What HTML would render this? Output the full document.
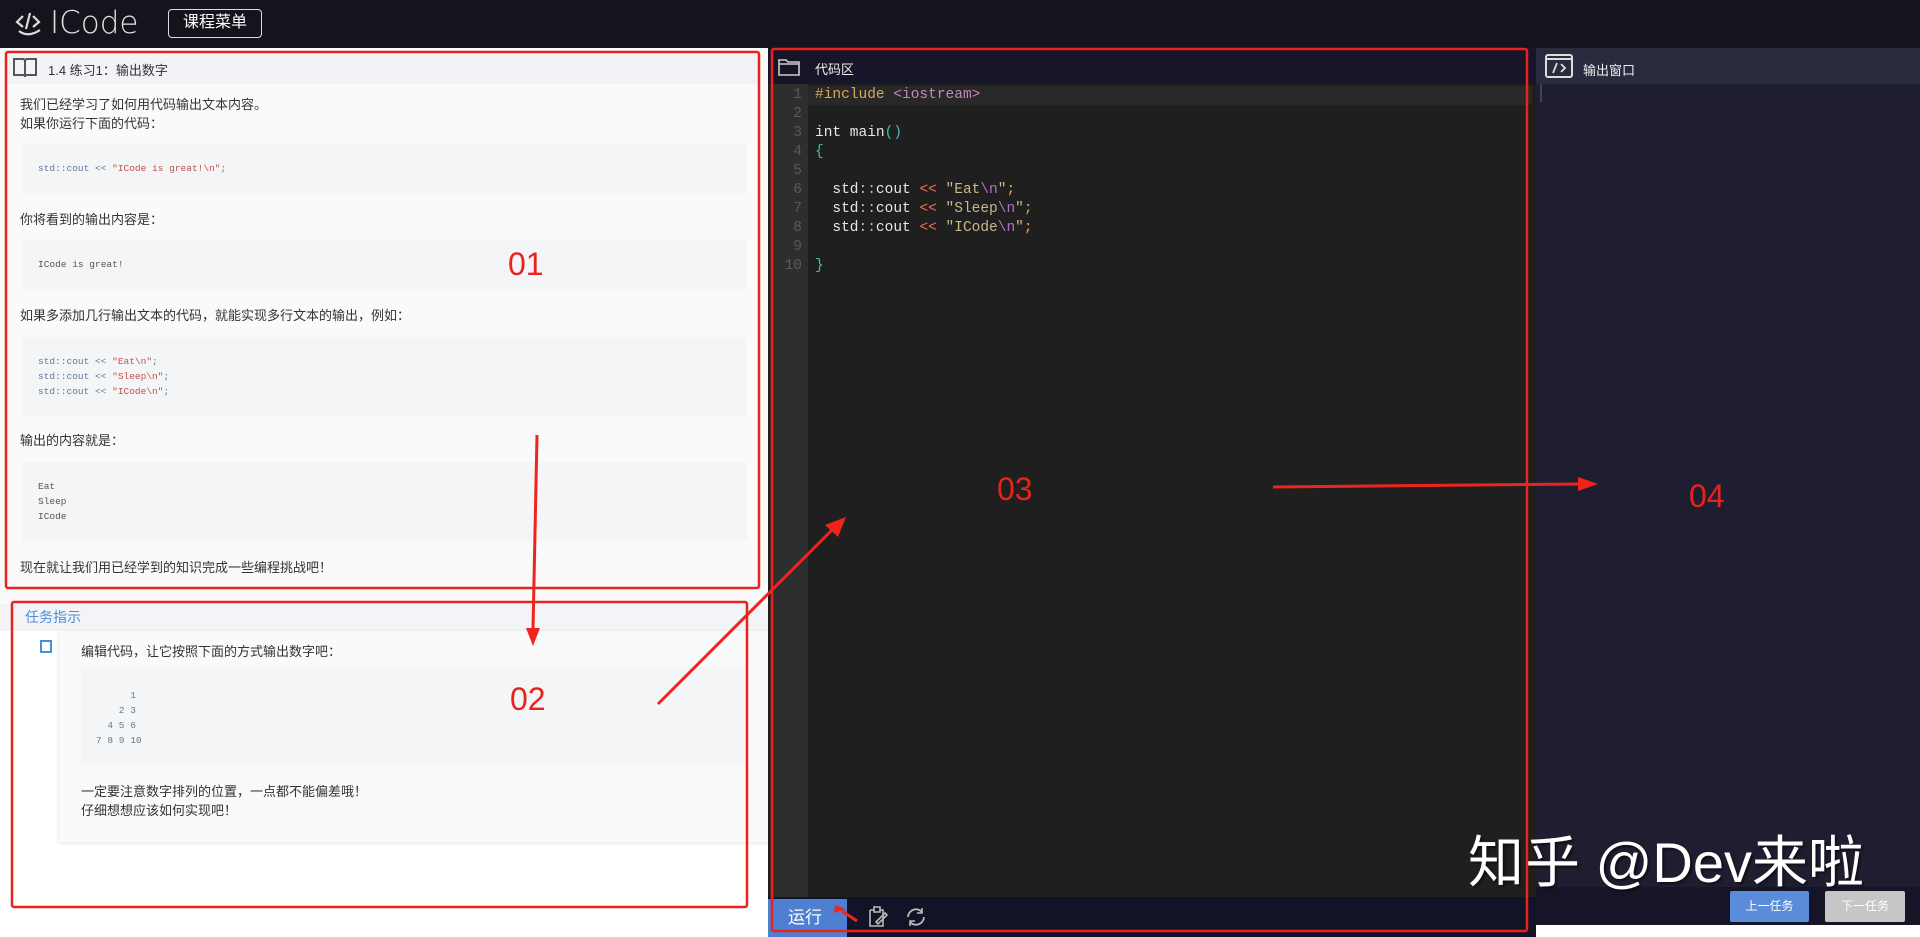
<!DOCTYPE html>
<html><head><meta charset="utf-8"><style>
*{margin:0;padding:0;box-sizing:border-box}
body{width:1920px;height:937px;overflow:hidden;background:#fff;font-family:"Liberation Sans","Noto Sans CJK SC",sans-serif;position:relative}
.a{position:absolute}
.t{font-size:13px;color:#333;white-space:nowrap}
.cb{position:absolute;left:22px;width:725px;background:#f4f5f7}
.m{font-family:"Liberation Mono",monospace;font-size:9.5px;line-height:15px;white-space:pre}
.ed{font-family:"Liberation Mono","DejaVu Sans Mono",monospace;font-size:14.5px;line-height:19px;white-space:pre}
</style></head><body>
<!-- header -->
<div class="a" style="left:0;top:0;width:1920px;height:48px;background:#14141c"></div>
<svg class="a" style="left:14px;top:10px" width="36" height="28" viewBox="0 0 36 28"><path d="M9 6 L3 12 L9 17 M16 3 L12 19 M19 6 L25 12 L19 17" stroke="#ddd" stroke-width="2.2" fill="none"/><path d="M5 21 Q14 28 26 20" stroke="#ddd" stroke-width="2.2" fill="none"/></svg>
<div class="a" style="left:50px;top:5px;color:#e0e0e0;font-size:31px;font-family:'DejaVu Sans',sans-serif;font-weight:200">ICode</div>
<div class="a" style="left:168px;top:9px;width:94px;height:29px;border:1.5px solid #ddd;border-radius:4px;color:#fff;font-size:16px;text-align:center;line-height:26px">课程菜单</div>

<!-- left panel -->
<div class="a" style="left:0;top:48px;width:768px;height:556px;background:#fafafa"></div>
<div class="a" style="left:5px;top:55px;width:755px;height:29px;background:#f2f3f7"></div>
<svg class="a" style="left:12px;top:57px" width="26" height="22" viewBox="0 0 26 22"><path d="M2 2 H11 Q13 2 13 5 V20 Q13 18 11 18 H2 Z M24 2 H15 Q13 2 13 5 V20 Q13 18 15 18 H24 Z" fill="none" stroke="#555" stroke-width="2"/></svg>
<div class="a t" style="left:48px;top:60px">1.4 练习1：输出数字</div>
<div class="a t" style="left:20px;top:95px;line-height:19px">我们已经学习了如何用代码输出文本内容。<br>如果你运行下面的代码：</div>
<div class="cb" style="top:144px;height:49px"></div>
<div class="a m" style="left:38px;top:161px;color:#5a7a9a">std::cout &lt;&lt; <span style="color:#c0504d">"ICode is great!\n"</span>;</div>
<div class="a t" style="left:20px;top:209px">你将看到的输出内容是：</div>
<div class="cb" style="top:240px;height:49px"></div>
<div class="a m" style="left:38px;top:257px;color:#555">ICode is great!</div>
<div class="a t" style="left:20px;top:305px">如果多添加几行输出文本的代码，就能实现多行文本的输出，例如：</div>
<div class="cb" style="top:337px;height:79px"></div>
<div class="a m" style="left:38px;top:354px;color:#5a7a9a">std::cout &lt;&lt; <span style="color:#c0504d">"Eat\n"</span>;
std::cout &lt;&lt; <span style="color:#c0504d">"Sleep\n"</span>;
std::cout &lt;&lt; <span style="color:#c0504d">"ICode\n"</span>;</div>
<div class="a t" style="left:20px;top:430px">输出的内容就是：</div>
<div class="cb" style="top:462px;height:79px"></div>
<div class="a m" style="left:38px;top:479px;color:#555">Eat
Sleep
ICode</div>
<div class="a t" style="left:20px;top:557px">现在就让我们用已经学到的知识完成一些编程挑战吧！</div>

<div class="a" style="left:0;top:604px;width:768px;height:27px;background:#f3f4f8"></div>
<div class="a" style="left:25px;top:607px;font-size:14px;color:#4a8fd6">任务指示</div>
<div class="a" style="left:59px;top:631px;width:709px;height:211px;background:#fafafa;box-shadow:0 1px 4px rgba(0,0,0,.12)"></div>
<div class="a" style="left:40px;top:640px;width:12px;height:13px;border:2.5px solid #4a8fd6"></div>
<div class="a t" style="left:81px;top:641px">编辑代码，让它按照下面的方式输出数字吧：</div>
<div class="a" style="left:81px;top:667px;width:665px;height:98px;background:#f4f5f7"></div>
<div class="a m" style="left:96px;top:688px;color:#5a7a9a">      1
    2 3
  4 5 6
7 8 9 10</div>
<div class="a t" style="left:81px;top:782px;line-height:19px">一定要注意数字排列的位置，一点都不能偏差哦！<br>仔细想想应该如何实现吧！</div>

<!-- middle code panel -->
<div class="a" style="left:768px;top:48px;width:768px;height:889px;background:#1f1f1f"></div>
<div class="a" style="left:768px;top:48px;width:768px;height:36px;background:#161628"></div>
<svg class="a" style="left:777px;top:57px" width="24" height="20" viewBox="0 0 24 20"><path d="M2 3 H9 L11 5 H22 V18 H2 Z M2 7 H22" fill="none" stroke="#ccc" stroke-width="1.6"/></svg>
<div class="a" style="left:815px;top:59px;color:#eee;font-size:13px">代码区</div>
<div class="a" style="left:772px;top:84px;width:36px;height:813px;background:#2e2e2e"></div>
<div class="a" style="left:808px;top:86px;width:724px;height:19px;background:#282828"></div>
<div class="a ed" style="left:772px;top:86px;width:30px;text-align:right;color:#5a5a5a">1
2
3
4
5
6
7
8
9
10</div>
<div class="a ed" style="left:815px;top:86px;color:#e6e6e6"><span style="color:#d6a85c">#include</span> <span style="color:#c585c0">&lt;iostream&gt;</span>

int main<span style="color:#3fbfb0">()</span>
<span style="color:#3fbfb0">{</span>

  std<span style="color:#bbb">::</span>cout <span style="color:#f07050">&lt;&lt;</span> <span style="color:#c8b88a">"Eat<span style="color:#b070c0">\n</span>"</span><span style="color:#f0a050">;</span>
  std<span style="color:#bbb">::</span>cout <span style="color:#f07050">&lt;&lt;</span> <span style="color:#c8b88a">"Sleep<span style="color:#b070c0">\n</span>"</span><span style="color:#f0a050">;</span>
  std<span style="color:#bbb">::</span>cout <span style="color:#f07050">&lt;&lt;</span> <span style="color:#c8b88a">"ICode<span style="color:#b070c0">\n</span>"</span><span style="color:#f0a050">;</span>

<span style="color:#3fbfb0">}</span></div>
<div class="a" style="left:768px;top:897px;width:768px;height:40px;background:#131327"></div>
<div class="a" style="left:768px;top:899px;width:79px;height:38px;background:#4f7fd0;color:#fff;font-size:17px;line-height:38px;padding-left:20px">运行</div>
<svg class="a" style="left:866px;top:904px" width="24" height="26" viewBox="0 0 24 26"><path d="M4 6 H8 M14 6 H17 V22 H4 V6 M8 3 H14 V8 H8 Z M10 18 L19 9 L21 11 L12 20 Z" fill="none" stroke="#bbb" stroke-width="1.6"/></svg>
<svg class="a" style="left:904px;top:904px" width="24" height="26" viewBox="0 0 24 26"><path d="M4 13 A8 8 0 0 1 18 8 M20 13 A8 8 0 0 1 6 18" fill="none" stroke="#bbb" stroke-width="1.8"/><path d="M18 4 V9 H13 M6 22 V17 H11" fill="none" stroke="#bbb" stroke-width="1.6"/></svg>

<!-- right panel -->
<div class="a" style="left:1536px;top:48px;width:384px;height:839px;background:#1f1e30"></div>
<div class="a" style="left:1536px;top:48px;width:384px;height:36px;background:#2b2b3f"></div>
<div class="a" style="left:1540px;top:84px;width:2px;height:18px;background:#444"></div>
<svg class="a" style="left:1544px;top:53px" width="30" height="26" viewBox="0 0 30 26"><rect x="2" y="2" width="26" height="22" rx="2" fill="none" stroke="#ddd" stroke-width="2"/><path d="M3 6 H27" stroke="#ddd" stroke-width="2"/><path d="M9 20 L13 10 M17 11 L21 15 L17 19" fill="none" stroke="#ddd" stroke-width="1.8"/></svg>
<div class="a" style="left:1583px;top:60px;color:#eee;font-size:13px">输出窗口</div>
<div class="a" style="left:1536px;top:887px;width:384px;height:38px;background:#161528"></div>
<div class="a" style="left:1730px;top:891px;width:79px;height:31px;background:#5b8cd9;color:#fff;font-size:12px;text-align:center;line-height:31px;border-radius:2px">上一任务</div>
<div class="a" style="left:1825px;top:891px;width:80px;height:31px;background:#c6c6c6;color:#fff;font-size:12px;text-align:center;line-height:31px;border-radius:2px">下一任务</div>
<div class="a" style="left:1468px;top:818px;color:#fff;font-size:56px;white-space:nowrap;text-shadow:2px 2px 2px rgba(0,0,0,.5)">知乎 @Dev来啦</div>

<!-- annotations -->
<svg class="a" style="left:0;top:0" width="1920" height="937">
<g fill="none" stroke="#e8231c" stroke-width="2.5">
<rect x="6" y="52" width="753" height="536" rx="2"/>
<rect x="12" y="602" width="735" height="305" rx="2"/>
<rect x="772" y="49" width="755" height="882" rx="2"/>
</g>
<g stroke="#f0241c" stroke-width="3">
<line x1="537" y1="435" x2="533" y2="630"/>
<line x1="658" y1="704" x2="832" y2="530"/>
<line x1="1273" y1="487" x2="1580" y2="484"/>
<line x1="857" y1="921" x2="842" y2="911"/>
</g>
<g fill="#f0241c">
<polygon points="526,628 540,628 533,646"/>
<polygon points="825,525 838,537 846,517"/>
<polygon points="1578,477 1578,491 1598,484"/>
<polygon points="835,905 846,909 834,913"/>
</g>
<g fill="#e8231c" font-family="Liberation Sans, sans-serif" font-size="32">
<text x="508" y="275">01</text>
<text x="510" y="710">02</text>
<text x="997" y="500">03</text>
<text x="1689" y="507">04</text>
</g>
</svg>
</body></html>
